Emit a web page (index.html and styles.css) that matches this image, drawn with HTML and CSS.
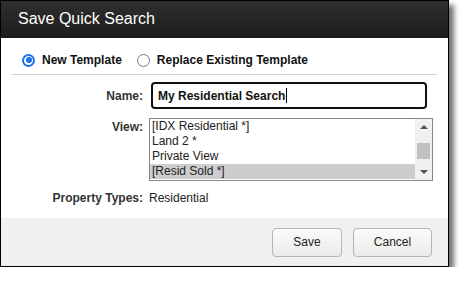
FILE: index.html
```html
<!DOCTYPE html>
<html>
<head>
<meta charset="utf-8">
<link rel="stylesheet" href="styles.css">
</head>
<body>
<div class="dialog">
  <div class="header">Save Quick Search</div>
  <div class="body">
    <div class="radios">
      <label class="radio"><span class="dot checked"></span>New Template</label>
      <label class="radio"><span class="dot"></span>Replace Existing Template</label>
    </div>
    <div class="form">
      <div class="label">Name:</div>
      <div class="input"><span>My Residential Search</span><span class="caret"></span></div>
      <div class="label">View:</div>
      <div class="list">
        <div class="items">
          <div class="item">[IDX Residential *]</div>
          <div class="item">Land 2 *</div>
          <div class="item">Private View</div>
          <div class="item sel">[Resid Sold *]</div>
        </div>
        <div class="scroll">
          <div class="arrow up"></div>
          <div class="track"><div class="thumb"></div></div>
          <div class="arrow down"></div>
        </div>
      </div>
      <div class="label plain">Property Types:</div>
      <div class="value">Residential</div>
    </div>
  </div>
  <div class="footer">
    <button class="btn save">Save</button>
    <button class="btn cancel">Cancel</button>
  </div>
</div>
</body>
</html>
```
FILE: styles.css
```css
html, body { margin: 0; padding: 0; background: #fff; }
body { font-family: "Liberation Sans", Arial, sans-serif; font-size: 12px; color: #222; }
.dialog {
  width: 449px;
  height: 267px;
  border: 1px solid #000;
  box-sizing: border-box;
  display: flex;
  flex-direction: column;
  box-shadow: 5px 5px 5px rgba(0,0,0,0.55);
  background: #fff;
}
.header {
  height: 37px;
  background: linear-gradient(#2f2f2f, #1c1c1c);
  color: #fff;
  font-size: 16px;
  padding-left: 17px;
  line-height: 36px;
  flex: none;
}
.body { flex: 1; padding: 0 11px; }
.radios {
  display: flex;
  align-items: center;
  gap: 15px;
  padding-left: 10px;
  padding-top: 8px;
  border-bottom: 1px solid #d0d0d0;
  box-sizing: border-box;
  height: 37px;
  font-weight: bold;
  font-size: 12px;
  color: #111;
}
.radio { display: flex; align-items: center; gap: 7px; }
.dot {
  width: 13px; height: 13px; border-radius: 50%;
  border: 1px solid #777; box-sizing: border-box; position: relative; background: #fff;
}
.dot.checked { border: 2px solid #1a73e8; }
.dot.checked::after {
  content: ""; position: absolute; left: 1.5px; top: 1.5px; width: 6px; height: 6px;
  border-radius: 50%; background: #1a73e8;
}
.form {
  display: grid;
  grid-template-columns: 131px 1fr;
  column-gap: 6px;
  row-gap: 9px;
  margin-top: 7px;
  padding-right: 4px;
  align-items: start;
}
.label { text-align: right; font-weight: bold; color: #333; padding-top: 7px; }
.label.plain { padding-top: 1px; }
.form .label:nth-of-type(3) { padding-top: 2px; }
.input {
  height: 27px;
  border: 2px solid #111;
  border-radius: 4px;
  box-sizing: border-box;
  display: flex; align-items: center;
  padding-left: 5px;
  font-weight: bold;
  color: #111;
  margin-left: 2px;
  margin-right: 6px;
}
.caret { width: 1px; height: 15px; background: #000; margin-left: 1px; }
.list {
  height: 63px;
  border: 1px solid #888;
  box-sizing: border-box;
  display: flex;
}
.items { flex: 1; }
.item { height: 15px; line-height: 15px; padding-left: 2px; color: #222; font-size: 12px; }
.item.sel { background: #cdcdcd; }
.scroll { width: 17px; background: #f0f0f0; display: flex; flex-direction: column; }
.arrow { height: 17px; position: relative; }
.arrow::after {
  content: ""; position: absolute; left: 5px; width: 0; height: 0;
  border-left: 4px solid transparent; border-right: 4px solid transparent;
}
.arrow.up::after { top: 6px; border-bottom: 4px solid #505050; }
.arrow.down::after { top: 7px; border-top: 4px solid #505050; }
.track { flex: 1; position: relative; }
.thumb { position: absolute; left: 2px; right: 2px; top: 7px; height: 16px; background: #c1c1c1; }
.value { color: #222; padding-top: 1px; }
.footer {
  height: 48px;
  flex: none;
  background: #f0f0f0;
  display: flex;
  justify-content: flex-end;
  align-items: center;
  gap: 11px;
  padding-right: 16px;
}
.btn {
  height: 29px;
  border: 1px solid #b5b5b5;
  border-radius: 4px;
  background: linear-gradient(#fafafa, #ececec);
  font-family: "Liberation Sans", Arial, sans-serif;
  font-size: 12px;
  color: #222;
  padding: 0;
}
.save { width: 70px; }
.cancel { width: 79px; }
```
